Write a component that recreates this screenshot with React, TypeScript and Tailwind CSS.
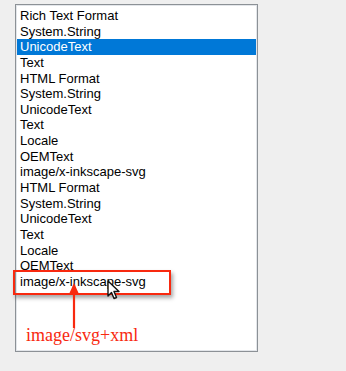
const items = [
  "Rich Text Format",
  "System.String",
  "UnicodeText",
  "Text",
  "HTML Format",
  "System.String",
  "UnicodeText",
  "Text",
  "Locale",
  "OEMText",
  "image/x-inkscape-svg",
  "HTML Format",
  "System.String",
  "UnicodeText",
  "Text",
  "Locale",
  "OEMText",
  "image/x-inkscape-svg",
];

function Cursor() {
  return (
    <svg width="14" height="21" viewBox="0 0 14 21" className="absolute left-[107px] top-[280px]">
      <path
        d="M1 1 L1 16 L4.5 12.5 L7 18.5 L9.5 17.5 L7 11.5 L12 11.5 Z"
        fill="#fff"
        stroke="#111"
        strokeWidth="1.4"
        strokeLinejoin="round"
      />
    </svg>
  );
}

export default function App() {
  return (
    <div className="relative h-[371px] w-[346px] overflow-hidden bg-[#efefef] pl-[15px] pt-[4px] font-['Liberation_Sans',Arial,sans-serif]">
      <div className="h-[348px] w-[243px] border border-[#8c9196] bg-white px-px py-[3px] shadow-[inset_0_0_0_1px_#e3e6ea]">
        {items.map((it, i) => (
          <div
            key={i}
            className={
              "h-[15.65px] pl-[3px] text-[13px] leading-[15.65px] " +
              (i === 2 ? "bg-[#0078d7] text-white" : "text-black")
            }
          >
            {it}
          </div>
        ))}
      </div>

      {/* annotation */}
      <div className="absolute left-[13px] top-[270px] h-[25px] w-[158px] border-2 border-[#f8290f] shadow-[2px_3px_4px_rgba(0,0,0,0.35)]" />
      <svg width="16" height="50" viewBox="0 0 16 50" className="absolute left-[66px] top-[282px]">
        <path d="M8 3 L8 46" stroke="#f8290f" strokeWidth="2.2" />
        <path d="M8 1 L3.5 11 L12.5 11 Z" fill="#f8290f" />
      </svg>
      <div className="absolute left-[26px] top-[326px] font-['Liberation_Serif','Times_New_Roman',serif] text-[18px] leading-none text-[#f8290f]">
        image/svg+xml
      </div>
      <Cursor />
    </div>
  );
}
